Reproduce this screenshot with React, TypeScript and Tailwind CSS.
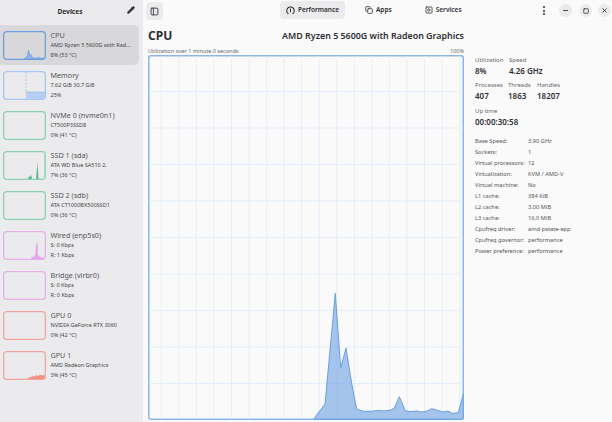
import { Copy, PanelLeft, SquarePlay, Minus, X, Square, Pencil } from "lucide-react";

const font = { fontFamily: '"Noto Sans", sans-serif' };

const cpuPts =
  "314,418.5 325,404 335.3,293.3 340.7,367.7 346,348.3 351.7,383.3 356.7,409 363.3,411.3 371.7,411.3 378.3,410.3 383.3,411 390,410.3 394.3,408.3 399.3,396.7 405.3,410.7 410,411.7 416.7,411 421.7,412 426.7,411.3 431.7,408.7 436.7,410 442.7,412 447.7,411 452.7,413.3 458.3,412.7 463.3,394";

const devices = [
  { name: "CPU", sub: "AMD Ryzen 5 5600G with Rad...", val: "8% (53 °C)", ring: "ring-[#6d9fe0]", kind: "cpu" },
  { name: "Memory", sub: "7.62 GiB 30.7 GiB", val: "25%", ring: "ring-[#a3c6f2]", kind: "mem" },
  { name: "NVMe 0 (nvme0n1)", sub: "CT500P3SSD8", val: "0% (41 °C)", ring: "ring-[#8dd0ae]", kind: "" },
  { name: "SSD 1 (sda)", sub: "ATA WD Blue SA510 2.", val: "7% (36 °C)", ring: "ring-[#8dd0ae]", kind: "ssd" },
  { name: "SSD 2 (sdb)", sub: "ATA CT1000BX500SSD1", val: "0% (36 °C)", ring: "ring-[#8dd0ae]", kind: "" },
  { name: "Wired (enp5s0)", sub: "S: 0 Kbps", val: "R: 1 Kbps", ring: "ring-[#e6aeea]", kind: "net" },
  { name: "Bridge (virbr0)", sub: "S: 0 Kbps", val: "R: 0 Kbps", ring: "ring-[#e6aeea]", kind: "" },
  { name: "GPU 0", sub: "NVIDIA GeForce RTX 3060", val: "0% (42 °C)", ring: "ring-[#f2a6a0]", kind: "" },
  { name: "GPU 1", sub: "AMD Radeon Graphics", val: "3% (45 °C)", ring: "ring-[#f2a6a0]", kind: "gpu" },
];

const info = [
  ["Base Speed:", "3.90 GHz"],
  ["Sockets:", "1"],
  ["Virtual processors:", "12"],
  ["Virtualization:", "KVM / AMD-V"],
  ["Virtual machine:", "No"],
  ["L1 cache:", "384 KiB"],
  ["L2 cache:", "3.00 MiB"],
  ["L3 cache:", "16.0 MiB"],
  ["Cpufreq driver:", "amd-pstate-epp"],
  ["Cpufreq governor:", "performance"],
  ["Power preference:", "performance"],
];

function Spark({ kind }: { kind: string }) {
  return (
    <svg viewBox="0 0 43 29" className="block w-full h-full">
      {kind === "cpu" && (
        <polygon points="21,28 24,25.5 25.5,19 27,24.5 28,23.5 30,27 34,27 36,26.5 38,27 42,27 42,28" fill="#8db5ea" stroke="#5b93dc" strokeWidth="0.5" />
      )}
      {kind === "mem" && (
        <>
          <line x1="23" y1="1" x2="23" y2="21" stroke="#8fb8ee" strokeWidth="0.8" strokeDasharray="2 1.5" />
          <rect x="23" y="21" width="19" height="7" fill="#b4cff2" />
          <line x1="23" y1="21" x2="42" y2="21" stroke="#8fb8ee" strokeWidth="0.6" />
        </>
      )}
      {kind === "ssd" && (
        <>
          <polygon points="25,28 26,25 27,26 28,23.5 29,28 32,28 33,28 34.5,11 35.5,28" fill="#5fb48c" />
          <rect x="41" y="1" width="1.5" height="27" fill="#a8dcc2" />
        </>
      )}
      {kind === "net" && (
        <polygon points="28,28 29,25 30,27 31,24 32,26 33,15 34,10 35,17 34.5,22 36,26 37,24 38,27 40,26 41,28" fill="#e3a6ea" />
      )}
      {kind === "gpu" && (
        <polygon points="24,28 26,26.5 28,26 30,25 32,25.5 33,24 35,25 37,23.5 39,24.5 41,23.5 42,28" fill="#f29088" />
      )}
    </svg>
  );
}

function Chart() {
  const vs = Array.from({ length: 18 }, (_, i) => 161.3 + i * 17.55);
  const hs = Array.from({ length: 9 }, (_, i) => 91.5 + i * 36.5);
  return (
    <svg viewBox="148 55 316 365" preserveAspectRatio="none" className="block w-full h-full">
      {vs.map((x) => (
        <line key={x} x1={x} y1="56" x2={x} y2="419" stroke="#e2edfb" strokeWidth="0.9" />
      ))}
      {hs.map((y) => (
        <line key={y} x1="149" y1={y} x2="463" y2={y} stroke="#e2edfb" strokeWidth="0.9" />
      ))}
      <polygon points={`${cpuPts} 464,420 314,420`} fill="#5f97de" fillOpacity="0.55" />
      <polyline points={cpuPts} fill="none" stroke="#5f97de" strokeWidth="0.9" />
    </svg>
  );
}

function GaugeIcon() {
  return (
    <svg viewBox="0 0 16 16" className="w-[9px] h-[9px]" fill="none" stroke="#2e2e32" strokeWidth="1.8" strokeLinecap="round">
      <path d="M3.8 13.6A6.7 6.7 0 1 1 12.2 13.6" />
      <path d="M8 5.2V10" />
    </svg>
  );
}

function Stat({ label, value, className }: { label: string; value: string; className: string }) {
  return (
    <div className={className}>
      <div className="text-[6px] leading-[8px] text-[#66666a]">{label}</div>
      <div className="mt-[1px] text-[8px] leading-[11px] font-semibold text-[#2e2e32]">{value}</div>
    </div>
  );
}

export default function App() {
  return (
    <div style={font} className="flex w-[612px] h-[422px] overflow-hidden bg-[#fafafb] text-[#2e2e32]">
      <aside className="w-[143px] shrink-0 bg-[#ebebed] flex flex-col">
        <div className="h-[25px] pb-px flex items-center justify-center relative pr-[3px]">
          <span className="text-[6.6px] font-bold">Devices</span>
          <Pencil size={8} strokeWidth={2.5} fill="#2e2e32" className="absolute right-[8px] top-[6px]" />
        </div>
        {devices.map((d, i) => (
          <div
            key={d.name}
            className={`h-[40px] w-[139px] shrink-0 flex items-center gap-[4.5px] pl-[3px] rounded-r-[5px] ${i === 0 ? "bg-[#d8d8da]" : ""}`}
          >
            <div className={`w-[43px] h-[29px] shrink-0 rounded-[4px] overflow-hidden ring-[1.3px] ring-inset ${d.ring}`}>
              <Spark kind={d.kind} />
            </div>
            <div className="min-w-0 whitespace-nowrap text-[#444448]">
              <div className="text-[7.2px] leading-[10px] text-[#55555a]">{d.name}</div>
              <div className="text-[5.5px] leading-[10px]">{d.sub}</div>
              <div className="text-[5.5px] leading-[10px]">{d.val}</div>
            </div>
          </div>
        ))}
      </aside>

      <main className="flex-1 min-w-0 flex flex-col">
        <header className="h-[20px] mt-px flex items-center relative shrink-0">
          <div className="ml-[3px] w-[17px] h-[18px] rounded-[4px] bg-[#ebebed] flex items-center justify-center">
            <PanelLeft size={9} strokeWidth={2.2} />
          </div>
          <div className="absolute left-[137px] top-0 flex items-center text-[6.5px] font-semibold">
            <div className="w-[65px] h-[18px] rounded-[4px] bg-[#ebebed] flex items-center justify-center gap-[3px]">
              <GaugeIcon />
              Performance
            </div>
            <div className="ml-[20px] flex items-center gap-[3px]">
              <Copy size={8} strokeWidth={2.4} />
              Apps
            </div>
            <div className="ml-[33px] flex items-center gap-[3px]">
              <SquarePlay size={8} strokeWidth={2.4} />
              Services
            </div>
          </div>
          <div className="absolute right-[1px] top-[3px] flex items-center">
            <div className="mr-[14px] flex flex-col gap-[1.5px]">
              <span className="w-[2px] h-[2px] rounded-full bg-[#2e2e32]" />
              <span className="w-[2px] h-[2px] rounded-full bg-[#2e2e32]" />
              <span className="w-[2px] h-[2px] rounded-full bg-[#2e2e32]" />
            </div>
            <div className="w-[13px] h-[13px] rounded-full bg-[#ebebed] flex items-center justify-center">
              <Minus size={7} strokeWidth={3} />
            </div>
            <div className="ml-[7px] w-[13px] h-[13px] rounded-full bg-[#ebebed] flex items-center justify-center">
              <Square size={6} strokeWidth={3} />
            </div>
            <div className="ml-[6px] w-[13px] h-[13px] rounded-full bg-[#ebebed] flex items-center justify-center">
              <X size={7} strokeWidth={3} />
            </div>
          </div>
        </header>

        <div className="flex-1 min-h-0 flex pl-[5px]">
          <section className="w-[316px] shrink-0 flex flex-col">
            <div className="h-[14px] mt-[8px] flex items-center justify-between font-semibold">
              <span className="text-[12px] font-bold leading-none">CPU</span>
              <span className="text-[8.9px] leading-none">AMD Ryzen 5 5600G with Radeon Graphics</span>
            </div>
            <div className="h-[11px] mt-px flex items-end justify-between text-[5.5px] leading-[8px] text-[#66666a]">
              <span>Utilization over 1 minute 0 seconds</span>
              <span>100%</span>
            </div>
            <div className="h-[365px] rounded-[3px] overflow-hidden ring-[1.5px] ring-inset ring-[#8db5ea]">
              <Chart />
            </div>
          </section>

          <section className="ml-[11px] flex-1 min-w-0 pt-[35px]">
            <div className="flex">
              <Stat className="w-[34px]" label="Utilization" value="8%" />
              <Stat className="" label="Speed" value="4.26 GHz" />
            </div>
            <div className="flex mt-[5px]">
              <Stat className="w-[33px]" label="Processes" value="407" />
              <Stat className="w-[29px]" label="Threads" value="1863" />
              <Stat className="" label="Handles" value="18207" />
            </div>
            <Stat className="mt-[6px]" label="Up time" value="00:00:30:58" />
            <div className="mt-[9px]">
              {info.map(([k, v]) => (
                <div key={k} className="flex h-[11px] items-center text-[5.7px] text-[#55555a] whitespace-nowrap">
                  <span className="w-[53px] shrink-0">{k}</span>
                  <span>{v}</span>
                </div>
              ))}
            </div>
          </section>
        </div>
      </main>
    </div>
  );
}
